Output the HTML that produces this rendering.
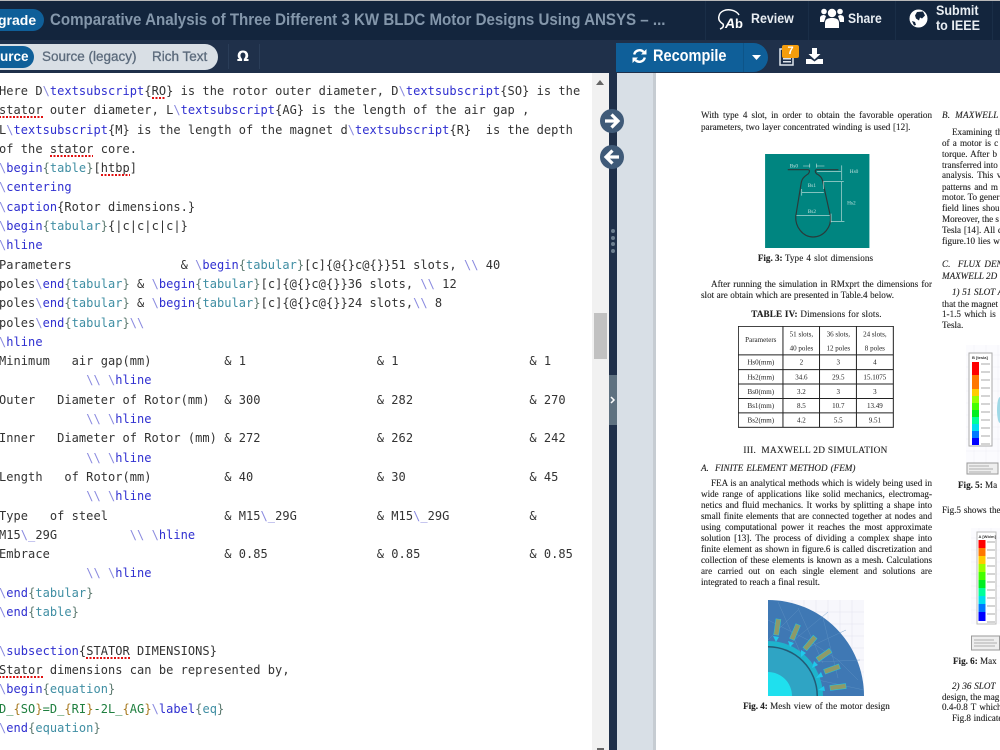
<!DOCTYPE html>
<html><head><meta charset="utf-8"><style>
html,body{margin:0;padding:0;width:1000px;height:750px;overflow:hidden;background:#fff}
#w{position:relative;width:1000px;height:750px;overflow:hidden;filter:blur(.3px)}
.a{position:absolute}
.u{font-family:"Liberation Sans",sans-serif;font-weight:bold;white-space:nowrap;position:absolute}
#ed{position:absolute;left:-1px;top:82px;width:600px;height:668px;overflow:hidden;font-family:"DejaVu Sans Mono",monospace;font-size:12px;letter-spacing:.04px;line-height:19.3px;color:#333}
#ed div{height:19.3px;white-space:pre}
#ed i{font-style:normal}
.c{color:#2f2fd0}.b{color:#8a8adf}.t{color:#3f8ea3}.k{color:#5d7a70}.s{position:relative}
.s:after{content:"";position:absolute;left:0;right:0;bottom:-1px;height:2px;background:repeating-linear-gradient(90deg,#e01010 0 2px,transparent 2px 3.5px)}
.g{color:#1f7f3f}.gb{color:#a87a20}
.p{position:absolute;font-family:"Liberation Serif",serif;font-size:9.1px;line-height:11px;color:#222;white-space:nowrap;-webkit-text-stroke:.12px #222}
.j{left:701px;width:231px;white-space:normal;text-align:justify;text-align-last:justify}
.r{left:942px}
.ce{left:701px;width:231px;text-align:center}
</style></head><body><div id="w">
<!-- top bar -->
<div class="a" style="left:0;top:0;width:1000px;height:40px;background:#13253d"></div>
<div class="a" style="left:0;top:0;width:1000px;height:1px;background:#b9b9b9"></div>
<div class="a" style="left:-20px;top:9px;width:64px;height:22px;border-radius:11px;background:#0f5f99"></div>
<div class="u" style="left:-2px;top:11px;font-size:14px;line-height:18px;color:#fff;width:38px;text-align:right">grade</div>
<div class="u" style="left:50px;top:10px;font-size:16.500px;line-height:20px;color:#8497ab;transform:scaleX(.915);transform-origin:0 50%">Comparative Analysis of Three Different 3 KW BLDC Motor Designs Using ANSYS – ...</div>
<div class="a" style="left:705px;top:1px;width:1px;height:39px;background:#1a2e47"></div>
<div class="a" style="left:808px;top:1px;width:1px;height:39px;background:#1a2e47"></div>
<div class="a" style="left:895px;top:1px;width:1px;height:39px;background:#1a2e47"></div>
<div class="a" style="left:992px;top:1px;width:1px;height:39px;background:#1a2e47"></div>
<svg class="a" style="left:717px;top:8px" width="30" height="23" viewBox="0 0 30 23"><path d="M3 21c3-1 4-3 3-5-3-2-5-4-4-8 1-5 7-7 12-6 4 .5 7 3 8 5" fill="none" stroke="#fff" stroke-width="1.500"/><text x="8" y="20" font-family="Liberation Sans" font-size="14" font-style="italic" font-weight="bold" fill="#fff">A</text><text x="18" y="20" font-family="Liberation Sans" font-size="13" font-weight="bold" fill="#fff">b</text></svg>
<div class="u" style="left:751px;top:10px;font-size:13.500px;line-height:17px;color:#e8edf2;transform:scaleX(.92);transform-origin:0 50%">Review</div>
<svg class="a" style="left:820px;top:7px" width="24" height="23" viewBox="0 0 24 23" fill="#fff"><circle cx="12" cy="6" r="4.200"/><circle cx="4" cy="4.500" r="2.800"/><circle cx="20" cy="4.500" r="2.800"/><path d="M5 21v-5c0-4 3-5 7-5s7 1 7 5v5z"/><path d="M0 15v-4c0-2 2-3 4-3l2 1-2 6zM24 15v-4c0-2-2-3-4-3l-2 1 2 6z"/></svg>
<div class="u" style="left:848px;top:10px;font-size:13.500px;line-height:17px;color:#e8edf2;transform:scaleX(.9);transform-origin:0 50%">Share</div>
<svg class="a" style="left:909px;top:9px" width="19" height="19" viewBox="0 0 19 19"><circle cx="9.500" cy="9.500" r="9" fill="#fff"/><path d="M8 3l6-.5 2 4-3 3-2-1-1 3-3-2-1-3zM3 12l3 1 1 3-2 .5z" fill="#13253d"/></svg>
<div class="u" style="left:936px;top:4px;font-size:13.500px;line-height:14.500px;color:#e8edf2;transform:scaleX(.93);transform-origin:0 50%">Submit<br>to IEEE</div>
<!-- toolbar -->
<div class="a" style="left:0;top:40px;width:1000px;height:33px;background:#1f304a"></div>
<div class="a" style="left:-20px;top:43.500px;width:238px;height:26.500px;border-radius:13px;background:#d9dfe5"></div>
<div class="a" style="left:-20px;top:46px;width:54px;height:22px;border-radius:11px;background:#0f5f99"></div>
<div class="u" style="left:0;top:48px;font-size:13.500px;line-height:18px;color:#fff;width:26px;text-align:right">urce</div>
<div class="u" style="left:42px;top:47.500px;font-size:13.500px;line-height:18px;color:#5c6b7c;font-weight:normal;-webkit-text-stroke:.3px #5c6b7c">Source (legacy)</div>
<div class="u" style="left:152px;top:47.500px;font-size:13.500px;line-height:18px;color:#5c6b7c;font-weight:normal;-webkit-text-stroke:.3px #5c6b7c">Rich Text</div>
<div class="a" style="left:228px;top:44px;width:1px;height:25px;background:#2a3d58"></div>
<div class="a" style="left:259px;top:44px;width:1px;height:25px;background:#2a3d58"></div>
<div class="u" style="left:237px;top:48px;font-size:14px;line-height:18px;color:#fff;font-family:'DejaVu Sans',sans-serif">Ω</div>
<div class="a" style="left:616px;top:43px;width:152px;height:29px;background:#0f5f99;border-radius:0 15px 15px 0"></div>
<div class="a" style="left:743px;top:43px;width:1px;height:29px;background:#0d5488"></div>
<svg class="a" style="left:632px;top:48px" width="15" height="16" viewBox="0 0 15 16"><path d="M2.200 6.500A5.500 5.500 0 0 1 11.600 4M12.800 9.500A5.500 5.500 0 0 1 3.400 12" fill="none" stroke="#fff" stroke-width="2.400"/><path d="M14.500 1v5.500H9zM.5 15V9.500H6z" fill="#fff"/></svg>
<div class="u" style="left:653px;top:46px;font-size:17px;line-height:20px;color:#fff;transform:scaleX(.855);transform-origin:0 50%">Recompile</div>
<svg class="a" style="left:752px;top:55px" width="9" height="5"><path d="M0 0h9L4.500 5z" fill="#fff"/></svg>
<svg class="a" style="left:779px;top:46px" width="17" height="20" viewBox="0 0 17 20"><path d="M1 3h13v16H1z" fill="none" stroke="#dfe5ec" stroke-width="1.500"/><path d="M4 12h8v1.500H4zM4 15h8v1.500H4z" fill="#dfe5ec"/></svg>
<div class="a" style="left:782px;top:45px;width:17px;height:13px;background:#f59d0c;border-radius:2px;color:#fff;font:bold 11px/13px 'Liberation Sans',sans-serif;text-align:center">7</div>
<svg class="a" style="left:806px;top:48px" width="17" height="16" viewBox="0 0 17 16" fill="#fff"><path d="M6 0h5v6h3.500L8.500 11.500 2.500 6H6z"/><path d="M0 11h5l3.500 2.500L12 11h5v5H0z"/></svg>
<!-- editor -->
<div id="ed"><div>Here D<i class="b">\</i><i class="c">textsubscript</i>{<i class="s">RO</i>} is the rotor outer diameter, D<i class="b">\</i><i class="c">textsubscript</i>{SO} is the</div><div><i class="s">stator</i> outer diameter, L<i class="b">\</i><i class="c">textsubscript</i>{AG} is the length of the air gap ,</div><div>L<i class="b">\</i><i class="c">textsubscript</i>{M} is the length of the magnet d<i class="b">\</i><i class="c">textsubscript</i>{R}  is the depth</div><div>of the <i class="s">stator</i> core.</div><div><i class="b">\</i><i class="c">begin</i><i class="k">{</i><i class="t">table</i><i class="k">}</i>[<i class="s">htbp</i>]</div><div><i class="b">\</i><i class="c">centering</i></div><div><i class="b">\</i><i class="c">caption</i>{Rotor dimensions.}</div><div><i class="b">\</i><i class="c">begin</i><i class="k">{</i><i class="t">tabular</i><i class="k">}</i>{|c|c|c|c|}</div><div><i class="b">\</i><i class="c">hline</i></div><div>Parameters               &amp; <i class="b">\</i><i class="c">begin</i><i class="k">{</i><i class="t">tabular</i><i class="k">}</i>[c]{@{}c@{}}51 slots, <i class="b">\\</i> 40</div><div>poles<i class="b">\</i><i class="c">end</i><i class="k">{</i><i class="t">tabular</i><i class="k">}</i> &amp; <i class="b">\</i><i class="c">begin</i><i class="k">{</i><i class="t">tabular</i><i class="k">}</i>[c]{@{}c@{}}36 slots, <i class="b">\\</i> 12</div><div>poles<i class="b">\</i><i class="c">end</i><i class="k">{</i><i class="t">tabular</i><i class="k">}</i> &amp; <i class="b">\</i><i class="c">begin</i><i class="k">{</i><i class="t">tabular</i><i class="k">}</i>[c]{@{}c@{}}24 slots,<i class="b">\\</i> 8</div><div>poles<i class="b">\</i><i class="c">end</i><i class="k">{</i><i class="t">tabular</i><i class="k">}</i><i class="b">\\</i></div><div><i class="b">\</i><i class="c">hline</i></div><div>Minimum   air gap(mm)          &amp; 1                  &amp; 1                  &amp; 1</div><div>            <i class="b">\\</i> <i class="b">\</i><i class="c">hline</i></div><div>Outer   Diameter of Rotor(mm)  &amp; 300                &amp; 282                &amp; 270</div><div>            <i class="b">\\</i> <i class="b">\</i><i class="c">hline</i></div><div>Inner   Diameter of Rotor (mm) &amp; 272                &amp; 262                &amp; 242</div><div>            <i class="b">\\</i> <i class="b">\</i><i class="c">hline</i></div><div>Length   of Rotor(mm)          &amp; 40                 &amp; 30                 &amp; 45</div><div>            <i class="b">\\</i> <i class="b">\</i><i class="c">hline</i></div><div>Type   of steel                &amp; M15<i class="b">\_</i>29G           &amp; M15<i class="b">\_</i>29G           &amp;</div><div>M15<i class="b">\_</i>29G          <i class="b">\\</i> <i class="b">\</i><i class="c">hline</i></div><div>Embrace                        &amp; 0.85               &amp; 0.85               &amp; 0.85</div><div>            <i class="b">\\</i> <i class="b">\</i><i class="c">hline</i></div><div><i class="b">\</i><i class="c">end</i><i class="k">{</i><i class="t">tabular</i><i class="k">}</i></div><div><i class="b">\</i><i class="c">end</i><i class="k">{</i><i class="t">table</i><i class="k">}</i></div><div> </div><div><i class="b">\</i><i class="c">subsection</i>{<i class="s">STATOR</i> DIMENSIONS}</div><div><i class="s">Stator</i> dimensions can be represented by,</div><div><i class="b">\</i><i class="c">begin</i><i class="k">{</i><i class="t">equation</i><i class="k">}</i></div><div><i class="g">D_</i><i class="gb">{</i><i class="g">SO</i><i class="gb">}</i><i class="g">=D_</i><i class="gb">{</i><i class="g">RI</i><i class="gb">}</i><i class="g">-2L_</i><i class="gb">{</i><i class="g">AG</i><i class="gb">}</i><i class="b">\</i><i class="c">label</i><i class="k">{</i><i class="t">eq</i><i class="k">}</i></div><div><i class="b">\</i><i class="c">end</i><i class="k">{</i><i class="t">equation</i><i class="k">}</i></div></div>
<!-- gutter -->
<div class="a" style="left:592px;top:73px;width:17px;height:677px;background:#f1f1f1"></div>
<div class="a" style="left:594px;top:313px;width:13px;height:46px;background:#c1c1c1"></div>
<svg class="a" style="left:596px;top:80px" width="8" height="5"><path d="M0 5h8L4 0z" fill="#666"/></svg>
<div class="a" style="left:597px;top:748px;width:7px;height:2px;background:#666"></div>
<div class="a" style="left:609px;top:73px;width:7.500px;height:677px;background:#1f304a"></div>
<div class="a" style="left:609px;top:375px;width:7.500px;height:50px;background:#5e7180"></div>
<svg class="a" style="left:610px;top:396px" width="6" height="8"><path d="M1 1l3 3-3 3" fill="none" stroke="#fff" stroke-width="1.500"/></svg>
<div class="a" style="left:611px;top:229px;width:4px;height:4px;border-radius:2px;background:#6d7f90"></div>
<div class="a" style="left:611px;top:235.500px;width:4px;height:4px;border-radius:2px;background:#6d7f90"></div>
<div class="a" style="left:611px;top:242px;width:4px;height:4px;border-radius:2px;background:#6d7f90"></div>
<div class="a" style="left:611px;top:248.500px;width:4px;height:4px;border-radius:2px;background:#6d7f90"></div>
<!-- pdf -->
<div class="a" style="left:616.500px;top:73px;width:38px;height:677px;background:#d8dfe6"></div>
<div class="a" style="left:653px;top:73px;width:3px;height:677px;background:#c6ccd2"></div>
<div class="a" style="left:656px;top:73px;width:344px;height:677px;background:#fff"></div>
<svg class="a" style="left:600px;top:109px" width="25" height="60" viewBox="0 0 25 60"><circle cx="12" cy="12" r="12" fill="#3f5a78"/><circle cx="12" cy="48" r="12" fill="#3f5a78"/><path d="M5 12h12M11.500 5.500l6.500 6.500-6.500 6.500" fill="none" stroke="#fff" stroke-width="3.200"/><path d="M19 48H7M12.500 41.500L6 48l6.500 6.500" fill="none" stroke="#fff" stroke-width="3.200"/></svg>

<div class="p j" style="top:109.500px">With type 4 slot, in order to obtain the favorable operation</div>
<div class="p" style="left:701px;top:121.500px;word-spacing:.45px">parameters, two layer concentrated winding is used [12].</div>

<svg class="a" style="left:765px;top:154px" width="104.500" height="94" viewBox="224 163 313 282">
<rect x="224" y="163" width="313" height="282" fill="#008580"/>
<path d="M292 210h60c8 0 5 8 2 12-8 6-20 12-22 30L316 350c-2 30 20 62 52 62s56-30 52-62L398 250c-2-18-12-24-20-28-4-4-6-12 2-12h64" fill="none" stroke="#2a3a3a" stroke-width="3.500"/>
<g stroke="#cfe6e2" stroke-width="1.800" fill="none"><path d="M338 199h20M378 199h24M358 192v12M378 192v12M454 197v44M380 216h72M400 246h60M453 246v118M422 366h40M334 278h66M318 348h100M422 342v26M334 268v20M400 268v-24"/></g>
<g font-family="Liberation Serif" font-size="16" fill="#bfe0dc"><text x="298" y="204">Bs0</text><text x="478" y="220">Hs0</text><text x="352" y="262">Bs1</text><text x="470" y="314">Hs2</text><text x="352" y="340">Bs2</text></g>
</svg>
<div class="p ce" style="top:253px;left:700px"><b>Fig. 3:</b> <span style="word-spacing:.7px;letter-spacing:.1px">Type 4 slot dimensions</span></div>
<div class="p j" style="top:278.500px;text-indent:10px">After running the simulation in RMxprt the dimensions for</div>
<div class="p" style="left:701px;top:289.500px;word-spacing:.25px">slot are obtain which are presented in Table.4 below.</div>
<div class="p ce" style="top:308.500px;letter-spacing:.15px;word-spacing:.3px"><b>TABLE IV:</b> Dimensions for slots.</div>

<svg class="a" style="left:738px;top:325.500px" width="156" height="102" viewBox="145 77 465 304">
<g fill="none" stroke="#222" stroke-width="3"><rect x="146" y="78" width="462" height="301"/><path d="M279 78v301M388 78v301M498 78v301M146 163h462M146 207h462M146 250h462M146 293h462M146 336h462"/></g>
<g font-family="Liberation Serif" font-size="21" fill="#222" text-anchor="middle"><text x="213" y="125">Parameters</text><text x="334" y="108">51 slots,</text><text x="444" y="108">36 slots,</text><text x="553" y="108">24 slots,</text><text x="334" y="150">40 poles</text><text x="444" y="150">12 poles</text><text x="553" y="150">8 poles</text>
<text x="213" y="192">Hs0(mm)</text><text x="334" y="192">2</text><text x="444" y="192">3</text><text x="553" y="192">4</text>
<text x="213" y="236">Hs2(mm)</text><text x="334" y="236">34.6</text><text x="444" y="236">29.5</text><text x="553" y="236">15.1075</text>
<text x="213" y="279">Bs0(mm)</text><text x="334" y="279">3.2</text><text x="444" y="279">3</text><text x="553" y="279">3</text>
<text x="213" y="321">Bs1(mm)</text><text x="334" y="321">8.5</text><text x="444" y="321">10.7</text><text x="553" y="321">13.49</text>
<text x="213" y="364">Bs2(mm)</text><text x="334" y="364">4.2</text><text x="444" y="364">5.5</text><text x="553" y="364">9.51</text></g>
</svg>
<div class="p ce" style="top:445.500px;font-size:9.300px;letter-spacing:.3px;left:700px">III.&nbsp; MAXWELL 2D SIMULATION</div>
<div class="p" style="left:701px;top:462.500px;font-style:italic;word-spacing:.8px">A.&nbsp; FINITE ELEMENT METHOD (FEM)</div>
<div class="p j" style="top:477.500px;text-indent:10px">FEA is an analytical methods which is widely being used in</div>
<div class="p j" style="top:488.800px">wide range of applications like solid mechanics, electromag-</div>
<div class="p j" style="top:500px">netics and fluid mechanics. It works by splitting a shape into</div>
<div class="p j" style="top:511px">small finite elements that are connected together at nodes and</div>
<div class="p j" style="top:522px">using computational power it reaches the most approximate</div>
<div class="p j" style="top:532.500px">solution [13]. The process of dividing a complex shape into</div>
<div class="p j" style="top:543.500px">finite element as shown in figure.6 is called discretization and</div>
<div class="p j" style="top:554.700px">collection of these elements is known as a mesh. Calculations</div>
<div class="p j" style="top:565.500px">are carried out on each single element and solutions are</div>
<div class="p" style="left:701px;top:576.500px;word-spacing:.25px">integrated to reach a final result.</div>

<svg class="a" style="left:768px;top:600px" width="96" height="96" viewBox="0 0 96 96">
<rect width="96" height="96" fill="#f7f7fc"/>
<g stroke="#e2e2ef" stroke-width=".5"><path d="M0 12h96M0 24h96M0 36h96M0 48h96M0 60h96M0 72h96M0 84h96M12 0v96M24 0v96M36 0v96M48 0v96M60 0v96M72 0v96M84 0v96"/></g>
<path d="M0 96V0a96 96 0 0 1 96 96z" fill="#3f78b4"/>
<g stroke="#5f93c4" stroke-width=".4" fill="none"><path d="M0 20L40 40 70 60 90 80M0 40L30 10M20 45L60 12M35 50L78 30M48 62L92 60M50 80L96 90M10 2l22 50M30 8l25 55M55 18l15 60"/></g>
<path d="M0 96V41a55 55 0 0 1 55 55z" fill="#1eb3cc"/>
<path d="M0 96V46a50 50 0 0 1 50 50z" fill="#235b76"/>
<path d="M0 96V47.500a48.500 48.500 0 0 1 48.500 48.500z" fill="#2fa4c4"/>
<path d="M0 96V72a24 24 0 0 1 24 24z" fill="#1fe0ee"/>
<g fill="#8e9a68" stroke="#20c8e0" stroke-width=".5"><rect x="-2.500" y="-8" width="5" height="16" transform="translate(9.300 27) rotate(8)"/><rect x="-2.500" y="-8" width="5" height="16" transform="translate(27 32) rotate(23)"/><rect x="-2.500" y="-8" width="5" height="16" transform="translate(42 43) rotate(40)"/><rect x="-2.500" y="-8" width="5" height="16" transform="translate(56 55) rotate(55)"/><rect x="-2.500" y="-8" width="5" height="16" transform="translate(64 69) rotate(70)"/><rect x="-2.500" y="-8" width="5" height="16" transform="translate(70 87) rotate(83)"/></g>
<g fill="#20c8ec"><path d="M5 36l6 1-3 5zM20 41l6 2-4 4zM33 50l5 3-5 4zM46 61l4 4-6 3zM53 72l2 5-7 1zM56 86l1 5-7-1z"/></g>
</svg>
<div class="p ce" style="top:700.500px"><b>Fig. 4:</b> <span style="word-spacing:.7px;letter-spacing:.1px">Mesh view of the motor design</span></div>

<!-- right col -->
<div class="p r" style="top:109.500px;font-style:italic;letter-spacing:.2px">B.&nbsp; MAXWELL</div>
<div class="p" style="left:952px;top:126.500px;word-spacing:1px">Examining th</div>
<div class="p r" style="top:137.500px;word-spacing:.9px">of a motor is c</div>
<div class="p r" style="top:148.500px;word-spacing:.9px">torque. After b</div>
<div class="p r" style="top:159.500px">transferred into</div>
<div class="p r" style="top:169.500px;word-spacing:1.400px">analysis. This v</div>
<div class="p r" style="top:181.500px;word-spacing:1.200px">patterns and m</div>
<div class="p r" style="top:191.500px">motor. To gener</div>
<div class="p r" style="top:202.500px;word-spacing:1px">field lines shou</div>
<div class="p r" style="top:213.500px">Moreover, the s</div>
<div class="p r" style="top:224.500px;word-spacing:.5px">Tesla [14]. All c</div>
<div class="p r" style="top:235.500px;word-spacing:.5px">figure.10 lies w</div>
<div class="p r" style="top:258.500px;font-style:italic;word-spacing:1.500px">C.&nbsp; FLUX DEN</div>
<div class="p r" style="top:270.500px;font-style:italic">MAXWELL 2D</div>
<div class="p" style="left:952px;top:287px;font-style:italic;word-spacing:.4px">1) 51 SLOT A</div>
<div class="p r" style="top:298.500px">that the magnet</div>
<div class="p r" style="top:308.500px;word-spacing:1px">1-1.5 which is</div>
<div class="p r" style="top:319.500px">Tesla.</div>

<svg class="a" style="left:966px;top:345px" width="34" height="130" viewBox="0 0 34 130">
<rect width="34" height="118" fill="#fbfbfe"/><g stroke="#eeeef6" stroke-width=".5"><path d="M0 10h34M0 22h34M0 34h34M0 46h34M0 58h34M0 70h34M0 82h34M0 94h34M0 106h34M8 0v118M20 0v118M32 0v118"/></g>
<rect x="3" y="8" width="23" height="93" fill="#fff" stroke="#aaa"/>
<text x="6" y="14" font-family="Liberation Sans" font-size="4" font-weight="bold" fill="#333">B [tesla]</text>
<rect x="6" y="17" width="7" height="13" fill="#f00"/><rect x="6" y="30" width="7" height="14" fill="#f70"/><rect x="6" y="44" width="7" height="7" fill="#fc0"/><rect x="6" y="51" width="7" height="7" fill="#9f0"/><rect x="6" y="58" width="7" height="7" fill="#4f0"/><rect x="6" y="65" width="7" height="7" fill="#0e2"/><rect x="6" y="72" width="7" height="7" fill="#0f9"/><rect x="6" y="79" width="7" height="7" fill="#0de"/><rect x="6" y="86" width="7" height="7" fill="#07f"/><rect x="6" y="93" width="7" height="7" fill="#00f"/>
<g stroke="#aaa" stroke-width="1"><path d="M15 19h9M15 27h9M15 35h9M15 43h9M15 51h9M15 59h9M15 67h9M15 75h9M15 83h9M15 91h9M15 99h9"/></g>
<rect x="1" y="118" width="31" height="11" fill="#eee" stroke="#999"/>
<g stroke="#999" stroke-width=".8"><path d="M3 121h20M3 124h24M3 127h22"/></g>
<path d="M34 52a3 13 0 0 0 0 26z" fill="#9fd8e6"/>
</svg>
<div class="p" style="left:958px;top:480px;white-space:nowrap"><b>Fig. 5:</b> Ma</div>
<div class="p r" style="top:504.500px;word-spacing:.6px">Fig.5 shows the</div>

<svg class="a" style="left:971px;top:528px" width="29" height="125" viewBox="0 0 29 125">
<rect width="29" height="96" fill="#fbfbfe"/><g stroke="#eeeef6" stroke-width=".5"><path d="M0 10h29M0 22h29M0 34h29M0 46h29M0 58h29M0 70h29M0 82h29M8 0v96M20 0v96"/></g>
<rect x="6" y="4" width="19" height="92" fill="#fff" stroke="#bbb"/>
<text x="7.500" y="10" font-family="Liberation Sans" font-size="4" font-weight="bold" fill="#333">A [Wb/m]</text>
<rect x="7.500" y="12" width="7" height="8" fill="#f00"/><rect x="7.500" y="20" width="7" height="8" fill="#f70"/><rect x="7.500" y="28" width="7" height="8" fill="#fc0"/><rect x="7.500" y="36" width="7" height="8" fill="#9f0"/><rect x="7.500" y="44" width="7" height="8" fill="#4f0"/><rect x="7.500" y="52" width="7" height="8" fill="#0e2"/><rect x="7.500" y="60" width="7" height="8" fill="#0f9"/><rect x="7.500" y="68" width="7" height="8" fill="#0de"/><rect x="7.500" y="76" width="7" height="8" fill="#07f"/><rect x="7.500" y="84" width="7" height="9" fill="#00f"/>
<g stroke="#aaa" stroke-width="1"><path d="M16 14h8M16 22h8M16 30h8M16 38h8M16 46h8M16 54h8M16 62h8M16 70h8M16 78h8M16 86h8M16 94h8"/></g>
<rect x=".5" y="108" width="28" height="14" fill="#eee" stroke="#999"/>
<g stroke="#999" stroke-width=".8"><path d="M3 112h20M3 115h23M3 118h21"/></g>
</svg>
<div class="p" style="left:953px;top:655.500px"><b>Fig. 6:</b> Max</div>
<div class="p" style="left:952px;top:680.500px;font-style:italic;word-spacing:.5px">2) 36 SLOT</div>
<div class="p r" style="top:691.500px">design, the mag</div>
<div class="p r" style="top:701.500px;word-spacing:.9px">0.4-0.8 T which</div>
<div class="p" style="left:952px;top:712.500px;word-spacing:.4px">Fig.8 indicate</div>
</div></body></html>
